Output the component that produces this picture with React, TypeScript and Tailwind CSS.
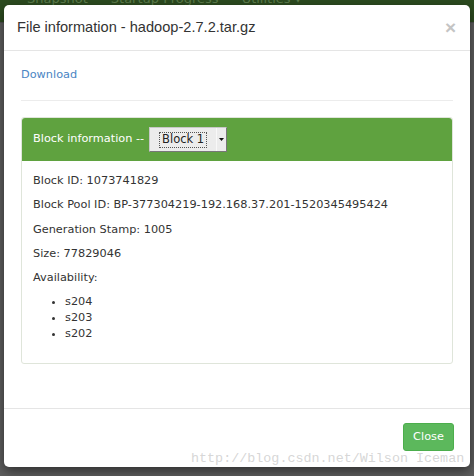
import React from 'react';

const blockInfo = [
  'Block ID: 1073741829',
  'Block Pool ID: BP-377304219-192.168.37.201-1520345495424',
  'Generation Stamp: 1005',
  'Size: 77829046',
];

const hosts = ['s204', 's203', 's202'];

function BlockSelect() {
  return (
    <div className="flex h-[25px] w-[78px] items-center border border-[#c8c8c8] border-b-[#777] border-r-[#777] bg-[#ececec] pl-[9px]">
      <span className="flex h-[16px] items-center border border-dotted border-[#555] px-[2px] text-[11.5px] leading-none text-[#222]">
        Block 1
      </span>
      <span className="ml-auto flex h-full w-[10px] items-center justify-center border-l border-[#f8f8f8]">
        <svg width="5" height="3" viewBox="0 0 5 3">
          <path d="M0 0h5L2.5 3z" fill="#111" />
        </svg>
      </span>
    </div>
  );
}

export default function App() {
  return (
    <div className="relative h-[476px] w-[474px] overflow-hidden bg-[#5e5e5e] font-['DejaVu_Sans',sans-serif]">
      {/* page behind the backdrop */}
      <div className="flex h-[22px] items-end gap-[23px] bg-[#2c4b1f] pl-[27px] text-[13px] leading-[13px] text-[#5d7d4d]">
        <span className="translate-y-[-17px]">Snapshot</span>
        <span className="translate-y-[-17px]">Startup Progress</span>
        <span className="translate-y-[-17px]">Utilities ▾</span>
      </div>
      <div className="h-[1px] bg-[#4f4f4f]" />

      {/* modal */}
      <div className="absolute left-[4px] top-[5px] flex h-[462px] w-[466px] flex-col rounded-[5px] bg-white shadow-[0_4px_12px_rgba(0,0,0,0.5)]">
        <div className="flex h-[46px] shrink-0 items-center border-b border-[#e5e5e5] pl-[13px] pr-[14px]">
          <h4 className="font-['Liberation_Sans',Arial,sans-serif] text-[14.6px] text-[#333]">
            File information - hadoop-2.7.2.tar.gz
          </h4>
          <span className="ml-auto font-['Liberation_Sans',Arial,sans-serif] text-[19px] font-bold leading-none text-[#c4c4c4]">
            ×
          </span>
        </div>

        <div className="flex-1 px-[17px] pt-[16px]">
          <a className="block text-[11.3px] leading-[16px] text-[#4a85c3]">Download</a>
          <hr className="mt-[17px] border-[#ececec]" />

          <div className="mt-[16px] rounded-[3px] border border-[#dfe5da]">
            <div className="flex h-[43px] items-center gap-[5px] rounded-t-[3px] bg-[#5fa23f] px-[11px] text-[11.3px] text-white">
              <span>Block information --</span>
              <BlockSelect />
            </div>
            <div className="px-[11px] pb-[20px] pt-[12px] text-[11.3px] leading-[16.3px] text-[#333]">
              {blockInfo.map(line => (
                <p key={line} className="mb-[8px]">{line}</p>
              ))}
              <p>Availability:</p>
              <ul className="mt-[7.4px] list-disc pl-[32px]">
                {hosts.map(h => (
                  <li key={h}>{h}</li>
                ))}
              </ul>
            </div>
          </div>
        </div>

        <div className="flex h-[59px] shrink-0 items-start justify-end border-t border-[#e5e5e5] pr-[16px] pt-[14px]">
          <button className="h-[28px] w-[51px] rounded-[3px] border border-[#4cae4c] bg-[#5cb85c] text-[11.3px] text-white">
            Close
          </button>
        </div>
      </div>

      {/* watermark */}
      <span className="absolute left-[191px] top-[450px] font-['Liberation_Mono',monospace] text-[13.4px] leading-[18px] text-[#d2d2d2]/90">
        http://blog.csdn.net/Wilson Iceman
      </span>
    </div>
  );
}
